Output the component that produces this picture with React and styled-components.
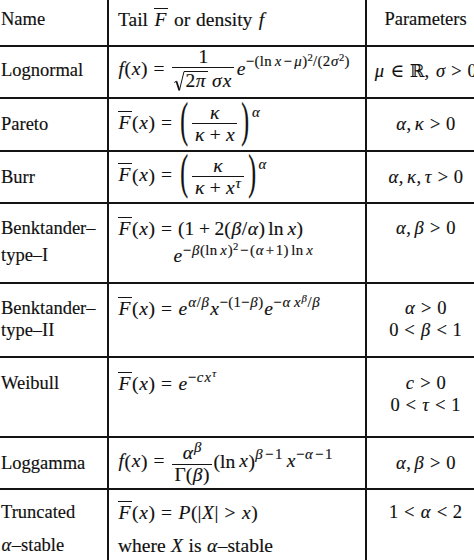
import styled, { createGlobalStyle } from "styled-components";

const INK = "#141414";

const GlobalStyle = createGlobalStyle`
  html, body {
    margin: 0;
    padding: 0;
    background: #ffffff;
    overflow: hidden;
  }
  body {
    font-family: "Liberation Serif", "DejaVu Serif", serif;
    font-size: 18.5px;
    color: #101010;
    -webkit-text-stroke: 0.15px #101010;
  }
`;

const Table = styled.div`
  width: 484px;
`;

const Row = styled.div`
  display: grid;
  grid-template-columns: 107px 260px 117px;
  height: ${p => p.$h}px;
  box-sizing: border-box;
  border-bottom: ${p => (p.$last ? "none" : `2px solid ${INK}`)};
`;

const Cell = styled.div`
  display: flex;
  flex-direction: column;
  justify-content: ${p => (p.$top === undefined ? "center" : "flex-start")};
  padding-top: ${p => p.$top || 0}px;
  padding-bottom: ${p => p.$lift || 0}px;
  box-sizing: border-box;
  white-space: nowrap;
  min-width: 0;
`;

const NameCell = styled(Cell)`
  padding-left: 1px;
`;

const FormulaCell = styled(Cell)`
  border-left: 2px solid ${INK};
  border-right: 2px solid ${INK};
  padding-left: 9px;
  font-size: 19.5px;
`;

const ParamCell = styled(Cell)`
  align-items: center;
`;

const Line = styled.div`
  ${p => p.$h && `height: ${p.$h}px; line-height: ${p.$h}px;`}
  padding-left: ${p => p.$indent || 0}px;
  word-spacing: ${p => p.$words || 0}px;
`;

/* math bits */
const V = styled.i`
  font-style: italic;
  padding: 0 0.03em;
`;

const Rel = styled.span`
  margin: 0 0.31em;
`;

const Bin = styled.span`
  margin: 0 0.24em;
`;

const Thin = styled.span`
  margin-left: 0.17em;
`;

const Sup = styled.sup`
  font-size: ${p => p.$size || 0.76}em;
  line-height: 0;
  letter-spacing: 0.02em;
  vertical-align: ${p => p.$up ?? 8}px;
`;

const ScriptOp = styled.span`
  margin: 0 0.1em;
`;

const Over = styled.span`
  display: inline-block;
  line-height: 0.72em;
  padding-top: 4px;
  padding-right: 1px;
  border-top: 1.3px solid ${INK};
`;

const Frac = styled.span`
  display: inline-flex;
  flex-direction: column;
  vertical-align: middle;
  text-align: center;
  margin: 0 2px;
`;

const Num = styled.span`
  line-height: ${p => p.$lh || 20}px;
  padding: 0 2px;
`;

const Den = styled.span`
  line-height: ${p => p.$lh || 22}px;
  border-top: 1.3px solid ${INK};
  padding: 0 2px;
`;

const Delim = styled.span`
  display: inline-block;
  line-height: 1;
  transform: scale(1.2, 2.5);
  transform-origin: 50% 59%;
  margin: 0 3px;
`;

const RadSign = styled.svg`
  width: 10px;
  height: 20px;
  vertical-align: -4px;
  overflow: visible;
`;

const RadBody = styled.span`
  display: inline-block;
  line-height: 18px;
  border-top: 1.2px solid ${INK};
  padding: 0 2px 0 1px;
`;

const BB = styled.span`
  font-family: "DejaVu Serif", serif;
  font-size: 0.95em;
`;

function Sqrt({ children }) {
  return (
    <span>
      <RadSign viewBox="0 0 10 20">
        <line x1="0.3" y1="11.5" x2="2.4" y2="10.2" stroke={INK} strokeWidth="1" />
        <line x1="2.4" y1="10.2" x2="5.4" y2="19.4" stroke={INK} strokeWidth="1.8" />
        <line x1="5.4" y1="19.4" x2="10" y2="0.6" stroke={INK} strokeWidth="1" />
      </RadSign>
      <RadBody>{children}</RadBody>
    </span>
  );
}

const Fbar = () => (
  <Over>
    <V>F</V>
  </Over>
);

export default function App() {
  return (
    <>
      <GlobalStyle />
      <Table>
        <Row $h={47}>
          <NameCell $lift={7}>Name</NameCell>
          <FormulaCell $lift={7}>
            <Line $words={1}>
              Tail <Fbar /> or density <V>f</V>
            </Line>
          </FormulaCell>
          <ParamCell $lift={7}>Parameters</ParamCell>
        </Row>

        <Row $h={52}>
          <NameCell $lift={4}>Lognormal</NameCell>
          <FormulaCell $lift={4}>
            <Line>
              <V>f</V>(<V>x</V>)<Rel>=</Rel>
              <Frac>
                <Num $lh={20}>1</Num>
                <Den $lh={26}>
                  <Sqrt>2<V>π</V></Sqrt>
                  <Thin />
                  <V>σ</V>
                  <V>x</V>
                </Den>
              </Frac>
              <V>e</V>
              <Sup $up={9}>
                −(ln<Thin />
                <V>x</V>
                <ScriptOp>−</ScriptOp>
                <V>μ</V>)<Sup $up={5} $size={0.72}>2</Sup>/(2<V>σ</V>
                <Sup $up={5} $size={0.72}>2</Sup>)
              </Sup>
            </Line>
          </FormulaCell>
          <ParamCell $lift={4}>
            <Line>
              <V>μ</V>
              <Rel>∈</Rel>
              <BB>ℝ</BB>,<Thin />
              <Thin />
              <V>σ</V>
              <Rel>&gt;</Rel>0
            </Line>
          </ParamCell>
        </Row>

        <Row $h={53}>
          <NameCell>Pareto</NameCell>
          <FormulaCell>
            <Line>
              <Fbar />(<V>x</V>)<Rel>=</Rel>
              <Delim>(</Delim>
              <Frac>
                <Num>
                  <V>κ</V>
                </Num>
                <Den>
                  <V>κ</V>
                  <Bin>+</Bin>
                  <V>x</V>
                </Den>
              </Frac>
              <Delim>)</Delim>
              <Sup $up={12}>
                <V>α</V>
              </Sup>
            </Line>
          </FormulaCell>
          <ParamCell>
            <Line>
              <V>α</V>,<Thin />
              <V>κ</V>
              <Rel>&gt;</Rel>0
            </Line>
          </ParamCell>
        </Row>

        <Row $h={52}>
          <NameCell>Burr</NameCell>
          <FormulaCell>
            <Line>
              <Fbar />(<V>x</V>)<Rel>=</Rel>
              <Delim>(</Delim>
              <Frac>
                <Num>
                  <V>κ</V>
                </Num>
                <Den>
                  <V>κ</V>
                  <Bin>+</Bin>
                  <V>x</V>
                  <Sup $up={6}>
                    <V>τ</V>
                  </Sup>
                </Den>
              </Frac>
              <Delim>)</Delim>
              <Sup $up={12}>
                <V>α</V>
              </Sup>
            </Line>
          </FormulaCell>
          <ParamCell>
            <Line>
              <V>α</V>,<Thin />
              <V>κ</V>,<Thin />
              <V>τ</V>
              <Rel>&gt;</Rel>0
            </Line>
          </ParamCell>
        </Row>

        <Row $h={80}>
          <NameCell $top={11}>
            <Line $h={27}>Benktander–</Line>
            <Line $h={27}>type–I</Line>
          </NameCell>
          <FormulaCell $top={11}>
            <Line $h={27}>
              <Fbar />(<V>x</V>)<Rel>=</Rel>(1<Bin>+</Bin>2(<V>β</V>/<V>α</V>)<Thin />
              ln<Thin />
              <V>x</V>)
            </Line>
            <Line $h={27} $indent={55}>
              <V>e</V>
              <Sup $up={7}>
                −<V>β</V>(ln<Thin />
                <V>x</V>)<Sup $up={5} $size={0.72}>2</Sup>
                <ScriptOp>−</ScriptOp>(<V>α</V>
                <ScriptOp>+</ScriptOp>1)<Thin />
                ln<Thin />
                <V>x</V>
              </Sup>
            </Line>
          </FormulaCell>
          <ParamCell $top={11}>
            <Line $h={27}>
              <V>α</V>,<Thin />
              <V>β</V>
              <Rel>&gt;</Rel>0
            </Line>
          </ParamCell>
        </Row>

        <Row $h={74}>
          <NameCell $top={13}>
            <Line $h={22}>Benktander–</Line>
            <Line $h={22}>type–II</Line>
          </NameCell>
          <FormulaCell $top={13}>
            <Line $h={22}>
              <Fbar />(<V>x</V>)<Rel>=</Rel>
              <V>e</V>
              <Sup $up={8}>
                <V>α</V>/<V>β</V>
              </Sup>
              <V>x</V>
              <Sup $up={8}>
                −(1−<V>β</V>)
              </Sup>
              <V>e</V>
              <Sup $up={8}>
                −<V>α</V>
                <Thin />
                <V>x</V>
                <Sup $up={5} $size={0.72}>
                  <V>β</V>
                </Sup>
                /<V>β</V>
              </Sup>
            </Line>
          </FormulaCell>
          <ParamCell $top={13}>
            <Line $h={22}>
              <V>α</V>
              <Rel>&gt;</Rel>0
            </Line>
            <Line $h={22}>
              0<Rel>&lt;</Rel>
              <V>β</V>
              <Rel>&lt;</Rel>1
            </Line>
          </ParamCell>
        </Row>

        <Row $h={80}>
          <NameCell $top={14}>
            <Line $h={22}>Weibull</Line>
          </NameCell>
          <FormulaCell $top={14}>
            <Line $h={22}>
              <Fbar />(<V>x</V>)<Rel>=</Rel>
              <V>e</V>
              <Sup $up={8}>
                −<V>c</V>
                <V>x</V>
                <Sup $up={5} $size={0.72}>
                  <V>τ</V>
                </Sup>
              </Sup>
            </Line>
          </FormulaCell>
          <ParamCell $top={14}>
            <Line $h={22}>
              <V>c</V>
              <Rel>&gt;</Rel>0
            </Line>
            <Line $h={22}>
              0<Rel>&lt;</Rel>
              <V>τ</V>
              <Rel>&lt;</Rel>1
            </Line>
          </ParamCell>
        </Row>

        <Row $h={52}>
          <NameCell>Loggamma</NameCell>
          <FormulaCell>
            <Line>
              <V>f</V>(<V>x</V>)<Rel>=</Rel>
              <Frac>
                <Num $lh={22}>
                  <V>α</V>
                  <Sup $up={7}>
                    <V>β</V>
                  </Sup>
                </Num>
                <Den $lh={20}>
                  Γ(<V>β</V>)
                </Den>
              </Frac>
              (ln<Thin />
              <V>x</V>)
              <Sup $up={8}>
                <V>β</V>
                <ScriptOp>−</ScriptOp>1
              </Sup>
              <Thin />
              <V>x</V>
              <Sup $up={8}>
                −<V>α</V>
                <ScriptOp>−</ScriptOp>1
              </Sup>
            </Line>
          </FormulaCell>
          <ParamCell>
            <Line>
              <V>α</V>,<Thin />
              <V>β</V>
              <Rel>&gt;</Rel>0
            </Line>
          </ParamCell>
        </Row>

        <Row $h={80} $last>
          <NameCell $top={6}>
            <Line $h={33}>Truncated</Line>
            <Line $h={33}>
              <V>α</V>–stable
            </Line>
          </NameCell>
          <FormulaCell $top={6}>
            <Line $h={33}>
              <Fbar />(<V>x</V>)<Rel>=</Rel>
              <V>P</V>(|<V>X</V>|<Rel>&gt;</Rel>
              <V>x</V>)
            </Line>
            <Line $h={33}>
              where <V>X</V> is <V>α</V>–stable
            </Line>
          </FormulaCell>
          <ParamCell $top={6}>
            <Line $h={33}>
              1<Rel>&lt;</Rel>
              <V>α</V>
              <Rel>&lt;</Rel>2
            </Line>
          </ParamCell>
        </Row>
      </Table>
    </>
  );
}
